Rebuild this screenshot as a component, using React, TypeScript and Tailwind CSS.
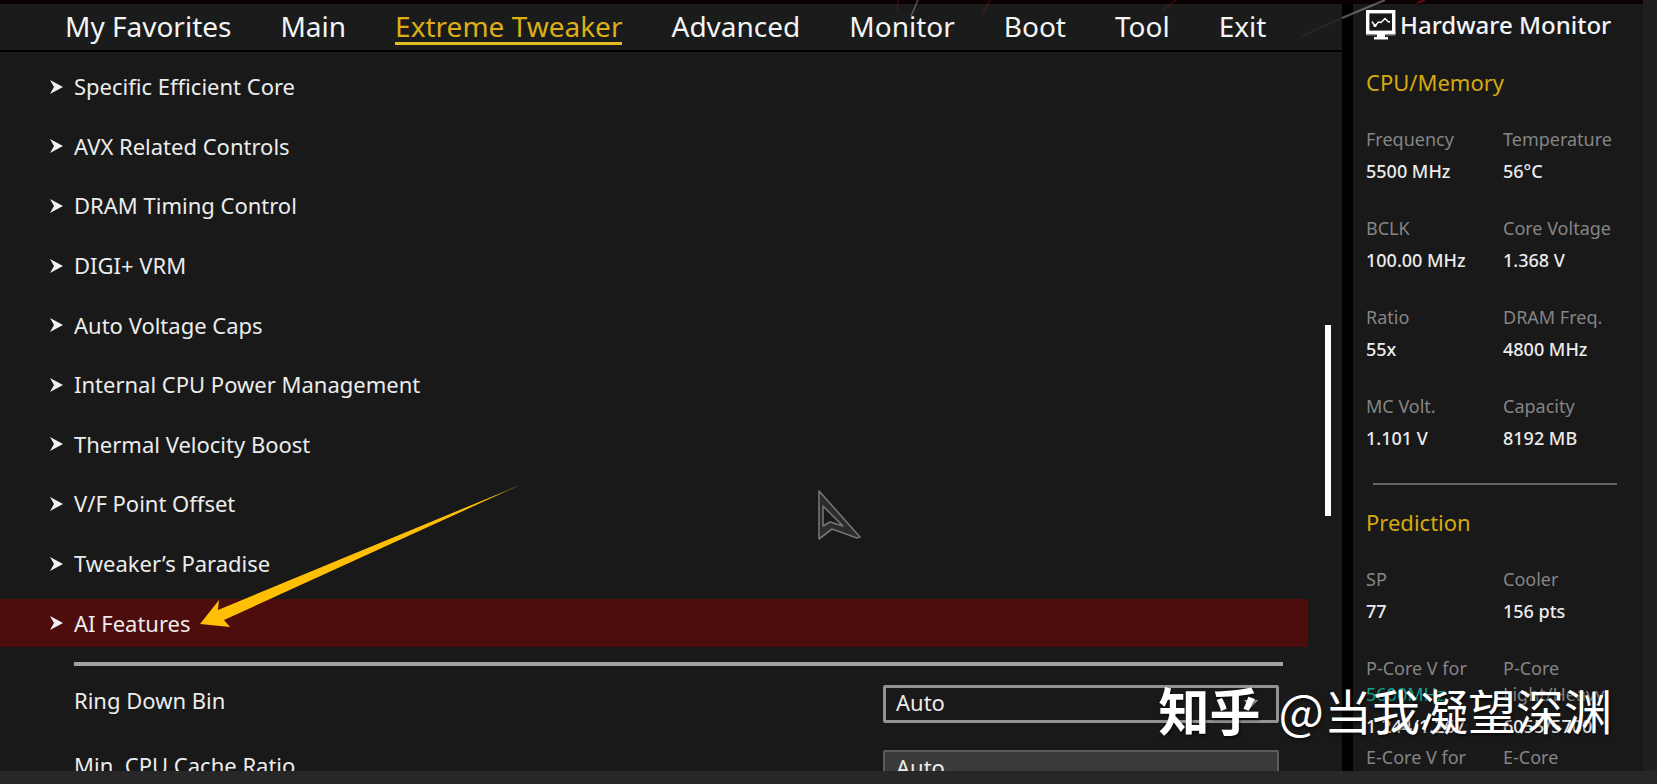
import React, { useState } from 'react';

const tabs = ['My Favorites', 'Main', 'Extreme Tweaker', 'Advanced', 'Monitor', 'Boot', 'Tool', 'Exit'];

const menuItems = [
  'Specific Efficient Core',
  'AVX Related Controls',
  'DRAM Timing Control',
  'DIGI+ VRM',
  'Auto Voltage Caps',
  'Internal CPU Power Management',
  'Thermal Velocity Boost',
  'V/F Point Offset',
  'Tweaker’s Paradise',
  'AI Features',
];

interface Reading {
  label: string;
  value?: string;
  note?: string;
  highlight?: boolean;
}

const cpuMemory: Reading[] = [
  { label: 'Frequency', value: '5500 MHz' },
  { label: 'Temperature', value: '56°C' },
  { label: 'BCLK', value: '100.00 MHz' },
  { label: 'Core Voltage', value: '1.368 V' },
  { label: 'Ratio', value: '55x' },
  { label: 'DRAM Freq.', value: '4800 MHz' },
  { label: 'MC Volt.', value: '1.101 V' },
  { label: 'Capacity', value: '8192 MB' },
];

const prediction: Reading[] = [
  { label: 'SP', value: '77' },
  { label: 'Cooler', value: '156 pts' },
  { label: 'P-Core V for', note: '5600MHz', highlight: true, value: '1.244/1.267' },
  { label: 'P-Core', note: 'Light/Heavy', value: '6055/5700' },
  { label: 'E-Core V for' },
  { label: 'E-Core' },
];

function ReadingGrid({ readings }: { readings: Reading[] }) {
  return (
    <dl className="mt-7 grid auto-rows-[89px] grid-cols-[137px_1fr] text-lg leading-[26px] whitespace-nowrap">
      {readings.map((r) => (
        <div key={r.label}>
          <dt className="text-[#858585]">
            {r.label}
            {r.note && <span className={r.highlight ? 'block text-[#10a090]' : 'block'}>{r.note}</span>}
          </dt>
          {r.value && <dd className="mt-1.5 font-medium text-[#ececec]">{r.value}</dd>}
        </div>
      ))}
    </dl>
  );
}

function SettingRow({ id, label, active }: { id: string; label: string; active?: boolean }) {
  return (
    <div className="flex h-[65px] items-start justify-between">
      <label htmlFor={id} className="leading-[30px]">{label}</label>
      <div className="relative w-[396px]">
        <select
          id={id}
          className={
            active
              ? 'block h-[38px] w-full appearance-none rounded-xs border-3 border-[#929292] bg-[#191919] px-2.5 pb-1 leading-7 outline-none'
              : 'block h-[38px] w-full appearance-none rounded-xs border-2 border-[#5c5c5c] bg-[#3a3a3a] px-[11px] pb-1 leading-7 outline-none'
          }
        >
          <option>Auto</option>
          <option>Manual</option>
        </select>
        {active && (
          <svg className="pointer-events-none absolute top-3.5 right-5 h-2.5 w-4" viewBox="0 0 16 10">
            <path d="M1 1h14L8 9z" fill="#b5b5b5" />
          </svg>
        )}
      </div>
    </div>
  );
}

function MonitorIcon() {
  return (
    <svg className="h-[30px] w-[30px]" viewBox="0 0 30 30" fill="none">
      <path d="M0 21h29.5v4.5H0z" fill="#8d8d8d" />
      <rect x="1.7" y="1.7" width="26" height="20.6" fill="#191919" stroke="#fff" strokeWidth="3.4" />
      <path d="M11 24h8v3h3v2.5H8V27h3z" fill="#fff" />
      <path d="M6 11.5l3 4.5 3.5-4 2.5.5 4-4 3 3 2 .5" stroke="#fff" strokeWidth="1.4" />
      <circle cx="9" cy="15.5" r="1.6" fill="#fff" />
    </svg>
  );
}

export default function App() {
  const [tab, setTab] = useState('Extreme Tweaker');
  const [selected, setSelected] = useState('AI Features');

  return (
    <div className="relative flex h-screen flex-col overflow-hidden bg-black font-['Noto_Sans','Noto_Sans_CJK_SC',sans-serif] text-[22px] text-[#ececec]">
      <div className="flex min-h-0 flex-1">
        <div className="flex min-w-0 flex-1 gap-[11px] border-t-4 border-[#0c0102]">
          <main className="relative flex min-w-0 flex-1 flex-col bg-[#191919]">
            <nav className="flex h-12 shrink-0 gap-[49px] border-b-2 border-black bg-[#1a1b1b] pt-1.5 pl-[65px] text-[28px] leading-8 whitespace-nowrap text-[#f4f4f4]">
              {tabs.map((t) => (
                <button
                  key={t}
                  onClick={() => setTab(t)}
                  className={
                    t === tab
                      ? 'h-[35px] border-b-3 border-[#e6bb22] text-[#dcae18]'
                      : 'h-[35px] border-b-3 border-transparent'
                  }
                >
                  {t}
                </button>
              ))}
            </nav>

            {/* Submenus */}
            <ul className="mt-[5px] flex h-[596px] shrink-0 flex-col">
              {menuItems.map((item) => (
                <li key={item} className="relative flex flex-1 items-center pr-[34px]">
                  <button
                    onClick={() => setSelected(item)}
                    className={
                      item === selected
                        ? 'flex h-12 w-full items-center gap-3 bg-[#4d0d0d] pl-[50px] text-left'
                        : 'flex h-12 w-full items-center gap-3 pl-[50px] text-left'
                    }
                  >
                    <svg className="h-3.5 w-3 shrink-0 overflow-visible" viewBox="0 0 12 14">
                      <path d="M0 0L13 7L0 14L4 7z" fill="#f2f2f2" />
                    </svg>
                    {item}
                  </button>
                  {item === 'AI Features' && (
                    <svg
                      className="pointer-events-none absolute bottom-6 left-[200px] h-[144px] w-80"
                      viewBox="0 0 320 144"
                    >
                      <path d="M0 139L19 115L18 125L320 0L24 135L30 142z" fill="#ffbf05" />
                    </svg>
                  )}
                </li>
              ))}
            </ul>

            <hr className="mt-[9px] mr-[59px] ml-[74px] h-1 shrink-0 border-0 bg-[#a3a3a3]" />

            {/* Settings */}
            <div className="min-h-0 flex-1 overflow-hidden pt-[19px] pr-[63px] pl-[74px]">
              <SettingRow id="ring-down-bin" label="Ring Down Bin" active />
              <SettingRow id="min-cache-ratio" label="Min. CPU Cache Ratio" />
            </div>

            {/* Scrollbar thumb */}
            <div className="absolute top-[321px] right-[11px] h-[191px] w-1.5 bg-white" />

            {/* Mouse pointer */}
            <svg className="pointer-events-none absolute top-[486px] left-[818px] h-[51px] w-11" viewBox="0 0 44 51">
              <path
                d="M1 1L42 47L39 48L14 39L1 49zM5 16V36L12 32L25 36z"
                fill="#2c2c2c"
                fillRule="evenodd"
                stroke="#747474"
                strokeWidth="1.6"
                strokeLinejoin="round"
              />
            </svg>
          </main>

          <aside className="w-[290px] shrink-0 overflow-hidden bg-[#191919] pt-[5px] pl-[13px]">
            <h1 className="flex h-8 items-center gap-1 text-2xl font-medium whitespace-nowrap text-[#f4f4f4]">
              <MonitorIcon />
              Hardware Monitor
            </h1>
            <h2 className="mt-[25px] leading-8 text-[#d5a90f]">CPU/Memory</h2>
            <ReadingGrid readings={cpuMemory} />
            <hr className="mt-px mr-[26px] ml-[7px] h-0.5 border-0 bg-[#5f6463]" />
            <h2 className="mt-[21px] leading-8 text-[#d5a90f]">Prediction</h2>
            <ReadingGrid readings={prediction} />
          </aside>
        </div>
        <div className="w-3.5 shrink-0 bg-[#1f1f1f]" />
      </div>
      <footer className="h-[13px] shrink-0 bg-[#272727]" />

      {/* Streaks of the wallpaper behind the panels */}
      <svg className="pointer-events-none absolute top-0 right-0 h-10 w-[780px]" viewBox="0 0 780 40" fill="none">
        <path d="M21 0L20 10M113 0L106 14M299 0L286 10" stroke="#b01020" strokeWidth="1.5" opacity="0.35" />
        <path d="M41 0L34 16" stroke="#999" strokeWidth="1.5" opacity="0.5" />
        <path d="M508 0L465 18" stroke="#b9a5a5" strokeWidth="2" opacity="0.5" />
        <path d="M465 18L425 36" stroke="#777" strokeWidth="1.5" opacity="0.15" />
        <path d="M548 0L540 3" stroke="#a01020" strokeWidth="2" opacity="0.6" />
      </svg>

      {/* Watermark */}
      <div className="pointer-events-none absolute right-[45px] bottom-[43px] flex items-center gap-[18px] font-['Noto_Sans_CJK_SC',sans-serif] text-5xl leading-[64px] whitespace-nowrap text-white [text-shadow:1px_2px_3px_rgba(0,0,0,0.6)]">
        <span className="text-[51px] font-bold">知乎</span>
        <span>@当我凝望深渊</span>
      </div>
    </div>
  );
}
